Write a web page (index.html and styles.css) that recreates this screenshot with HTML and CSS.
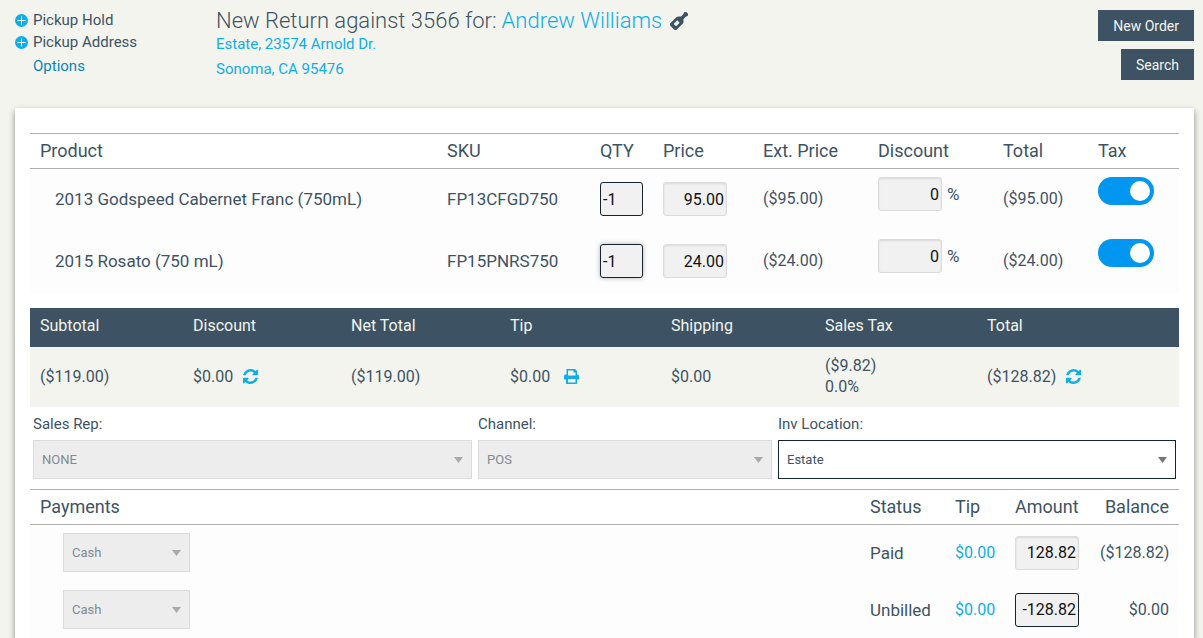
FILE: index.html
```html
<!DOCTYPE html>
<html lang="en">
<head>
<meta charset="utf-8">
<title>New Return</title>
<link rel="stylesheet" href="styles.css">
</head>
<body>
<svg class="sprite" aria-hidden="true">
  <symbol id="plus" viewBox="0 0 14 14"><circle cx="7" cy="7" r="7" fill="currentColor"/><path d="M7 2.600v8.800M2.600 7h8.800" stroke="#fff" stroke-width="1.1" fill="none"/></symbol>
  <symbol id="refresh" viewBox="0 0 1536 1536"><path fill="currentColor" d="M1511 928q0 5-1 7-64 268-268 434.500t-478 166.500q-146 0-282.500-55t-243.500-157l-129 129q-19 19-45 19t-45-19-19-45v-448q0-26 19-45t45-19h448q26 0 45 19t19 45-19 45l-137 137q71 66 161 102t187 36q134 0 250-65t186-179q11-17 53-117 8-23 30-23h192q13 0 22.500 9.500t9.500 22.500zM1536 128v448q0 26-19 45t-45 19h-448q-26 0-45-19t-19-45 19-45l138-138q-148-137-349-137-134 0-250 65t-186 179q-11 17-53 117-8 23-30 23h-199q-13 0-22.500-9.500t-9.500-22.500v-7q65-268 270-434.500t480-166.500q146 0 284 55.500t245 156.500l130-129q19-19 45-19t45 19 19 45z"/></symbol>
  <symbol id="print" viewBox="0 0 15 15"><path fill="currentColor" fill-rule="evenodd" d="M2.500 0h8.500l2 2v3.500h.5q1.500 0 1.500 1.500v3.500h-2V15h-11v-4.500H0V7q0-1.500 1.500-1.500h1zM4 1.500v5h7.500V3.500H9.500v-2zM4 10v3.500h7.500V10z"/></symbol>
  <symbol id="bottle" viewBox="0 0 18 18"><g transform="rotate(45 9 9)" fill="currentColor"><rect x="6.600" y="-2.500" width="4.800" height="3" rx=".8"/><path fill-rule="evenodd" d="M7.200 0h3.600v4.300c0 1 2.700 1.600 2.700 4V16.500c0 1.300-.8 2-2 2h-5c-1.200 0-2-.7-2-2V8.300c0-2.400 2.700-3 2.700-4zM7.300 9.800v5h3.400v-5z"/></g></symbol>
</svg>

<header class="top">
  <ul class="flags">
    <li><svg class="plus"><use href="#plus"/></svg>Pickup Hold</li>
    <li><svg class="plus"><use href="#plus"/></svg>Pickup Address</li>
    <li class="options"><a href="#">Options</a></li>
  </ul>
  <div class="heading">
    <h1>New Return against 3566 for: <a href="#">Andrew Williams</a> <svg class="bottle"><use href="#bottle"/></svg></h1>
    <address><a href="#">Estate, 23574 Arnold Dr.<br>Sonoma, CA 95476</a></address>
  </div>
  <div class="actions">
    <button type="button">New Order</button>
    <button type="button">Search</button>
  </div>
</header>

<main class="card">
  <table class="grid items">
    <colgroup><col><col class="c-sku"><col class="c-qty"><col class="c-price"><col class="c-ext"><col class="c-disc"><col class="c-total"><col class="c-tax"></colgroup>
    <thead><tr><th>Product</th><th>SKU</th><th>QTY</th><th>Price</th><th>Ext. Price</th><th>Discount</th><th>Total</th><th>Tax</th></tr></thead>
    <tbody>
      <tr>
        <td class="name">2013 Godspeed Cabernet Franc (750mL)</td><td class="name-like">FP13CFGD750</td>
        <td><input class="field qty" type="text" value="-1" aria-label="Quantity"></td>
        <td><input class="field" type="text" value="95.00" aria-label="Price"></td>
        <td>($95.00)</td>
        <td class="raised"><label class="percent"><input class="field" type="text" value="0" aria-label="Discount percent">%</label></td>
        <td>($95.00)</td>
        <td class="raised"><input class="toggle" type="checkbox" checked aria-label="Tax"></td>
      </tr>
      <tr>
        <td class="name">2015 Rosato (750 mL)</td><td>FP15PNRS750</td>
        <td><input class="field qty active" type="text" value="-1" aria-label="Quantity"></td>
        <td><input class="field" type="text" value="24.00" aria-label="Price"></td>
        <td>($24.00)</td>
        <td class="raised"><label class="percent"><input class="field" type="text" value="0" aria-label="Discount percent">%</label></td>
        <td>($24.00)</td>
        <td class="raised"><input class="toggle" type="checkbox" checked aria-label="Tax"></td>
      </tr>
    </tbody>
  </table>

  <table class="totals">
    <colgroup><col class="t-sub"><col class="t-disc"><col class="t-net"><col class="t-tip"><col class="t-ship"><col class="t-tax"><col></colgroup>
    <thead><tr><th>Subtotal</th><th>Discount</th><th>Net Total</th><th>Tip</th><th>Shipping</th><th>Sales Tax</th><th>Total</th></tr></thead>
    <tbody><tr>
      <td>($119.00)</td>
      <td><span class="with-icon">$0.00<button type="button" class="icon" aria-label="Refresh discount"><svg><use href="#refresh"/></svg></button></span></td>
      <td>($119.00)</td>
      <td><span class="with-icon tip">$0.00<button type="button" class="icon" aria-label="Print"><svg><use href="#print"/></svg></button></span></td>
      <td>$0.00</td>
      <td>($9.82)<br>0.0%</td>
      <td><span class="with-icon">($128.82)<button type="button" class="icon" aria-label="Refresh total"><svg><use href="#refresh"/></svg></button></span></td>
    </tr></tbody>
  </table>

  <div class="selectors">
    <div><label for="rep">Sales Rep:</label><div class="pick off"><select id="rep" disabled><option>NONE</option></select></div></div>
    <div><label for="channel">Channel:</label><div class="pick off"><select id="channel" disabled><option>POS</option></select></div></div>
    <div><label for="loc">Inv Location:</label><div class="pick"><select id="loc"><option>Estate</option></select></div></div>
  </div>

  <table class="grid payments">
    <colgroup><col><col class="p-status"><col class="p-tip"><col class="p-amount"><col class="p-balance"></colgroup>
    <thead><tr><th>Payments</th><th>Status</th><th>Tip</th><th>Amount</th><th class="right">Balance</th></tr></thead>
    <tbody>
      <tr>
        <td class="method"><div class="pick off"><select disabled aria-label="Payment method"><option>Cash</option></select></div></td>
        <td class="status">Paid</td><td><a href="#">$0.00</a></td>
        <td><input class="field" type="text" value="128.82" aria-label="Amount"></td><td class="right">($128.82)</td>
      </tr>
      <tr>
        <td class="method"><div class="pick off"><select disabled aria-label="Payment method"><option>Cash</option></select></div></td>
        <td class="status">Unbilled</td><td><a href="#">$0.00</a></td>
        <td><input class="field dark" type="text" value="-128.82" aria-label="Amount"></td><td class="right">$0.00</td>
      </tr>
    </tbody>
  </table>
</main>
</body>
</html>
```

FILE: styles.css
```css
* { box-sizing: border-box; }
body {
  margin: 0;
  min-height: 100vh;
  display: flex;
  flex-direction: column;
  background: #f4f4ef;
  color: #3d5363;
  font: 16px/22px Roboto, sans-serif;
}
a { color: #0eaee8; text-decoration: none; }
.sprite { display: none; }
input, select, button { font-family: inherit; }

.top { display: flex; align-items: flex-start; height: 108px; padding: 9px 9px 0 15px; }
.flags { list-style: none; margin: 0; padding: 0; width: 201px; font-size: 15px; }
.flags li { display: flex; align-items: center; gap: 5px; }
.flags .options { padding: 2px 0 0 18px; }
.options a { color: #0785bb; }
.plus { width: 13px; height: 13px; color: #0eaee8; }
.heading { flex: 1; }
h1 { margin: 0; font-size: 22px; line-height: 24px; font-weight: 300; display: flex; align-items: center; gap: 5px; }
.bottle { width: 18px; height: 18px; margin-left: 3px; overflow: visible; }
address { font-style: normal; font-size: 15px; line-height: 25px; margin-top: -1px; }
.actions { display: flex; flex-direction: column; align-items: flex-end; gap: 8px; padding-top: 1px; }
.actions button { height: 31px; padding: 0 15px; border: 0; background: #3d5363; color: #f4f4ef; font-size: 14px; }

.card { flex: 1; margin: 0 9px 0 15px; padding: 25px 15px 0; background: #fff; box-shadow: 0 3px 6px rgba(0, 0, 0, .45); }
table { width: 100%; table-layout: fixed; border-collapse: separate; border-spacing: 0; }
th { text-align: left; font-weight: 400; }
th, td { padding: 0 0 0 10px; white-space: nowrap; }

.grid th { height: 36px; border: solid #b0b0b0; border-width: 1px 0; font-size: 18px; }
.grid td { padding-bottom: 2px; background: #fdfdfd; font-size: 16px; }
.items { margin-bottom: 15px; }
.items td { height: 62px; }
.items .name { padding-left: 25px; }
.grid .name, .grid .name-like, .grid .name + td, .grid .status { font-size: 17px; }
.items .raised { vertical-align: top; padding-top: 8px; }
.grid .right { text-align: right; padding-right: 10px; }
.c-sku { width: 153px; }
.c-qty { width: 63px; }
.c-price { width: 100px; }
.c-ext { width: 115px; }
.c-disc { width: 125px; }
.c-total { width: 95px; }
.c-tax { width: 91px; }

.field {
  display: block;
  width: 64px;
  height: 34px;
  padding: 0 2px;
  border: 1px solid #dcdcdc;
  border-radius: 3px;
  background: #f1f1f1;
  box-shadow: inset 0 1px 2px rgba(0, 0, 0, .1);
  color: #111;
  font-size: 16px;
  text-align: right;
}
.qty { width: 43px; padding: 0 2px; text-align: left; }
.qty, .dark { border-color: #15242e; box-shadow: none; }
.active { box-shadow: 0 0 5px rgba(0, 0, 0, .3); }
.percent { display: flex; align-items: center; gap: 5px; font-size: 17px; }
.toggle {
  appearance: none;
  display: block;
  width: 56px;
  height: 28px;
  margin: 0;
  padding: 4px;
  border-radius: 14px;
  background: #0197f0;
}
.toggle::before { content: ""; display: block; width: 20px; height: 20px; margin-left: auto; border-radius: 50%; background: #fff; }

.totals th { height: 39px; padding-bottom: 3px; background: #3d5363; color: #f4f4ef; font-size: 16px; }
.totals td { height: 60px; padding-bottom: 2px; background: #f4f4ef; line-height: 21px; }
.t-sub { width: 153px; }
.t-disc { width: 158px; }
.t-net { width: 159px; }
.t-tip { width: 161px; }
.t-ship { width: 154px; }
.t-tax { width: 162px; }
.with-icon { display: flex; align-items: center; gap: 10px; }
.tip { gap: 14px; }
.icon { display: block; padding: 0; border: 0; background: none; color: #0eaee8; }
.icon svg { display: block; width: 15px; height: 15px; }

.selectors { display: grid; grid-template-columns: 439fr 294fr 398fr; gap: 6px; padding: 6px 3px 10px; }
.selectors label { display: block; height: 27px; font-size: 15px; }
.pick { position: relative; }
.pick::after {
  content: "";
  position: absolute;
  right: 9px;
  top: 17px;
  width: 9px;
  height: 6px;
  background: #777;
  clip-path: polygon(0 0, 100% 0, 50% 100%);
  pointer-events: none;
}
.pick.off::after { background: #aaa; }
select {
  appearance: none;
  display: block;
  width: 100%;
  height: 39px;
  padding: 0 8px;
  border: 1px solid #15242e;
  border-radius: 0;
  background: #fff;
  color: #3d5363;
  font-size: 13px;
}
select:disabled { border-color: #dcdcdc; background: #ededed; color: #7e8b94; opacity: 1; }

.payments td { height: 57px; }
.payments .method { padding-left: 33px; }
.method .pick { width: 127px; }
.p-status { width: 85px; }
.p-tip { width: 60px; }
.p-amount { width: 85px; }
.p-balance { width: 89px; }
```
